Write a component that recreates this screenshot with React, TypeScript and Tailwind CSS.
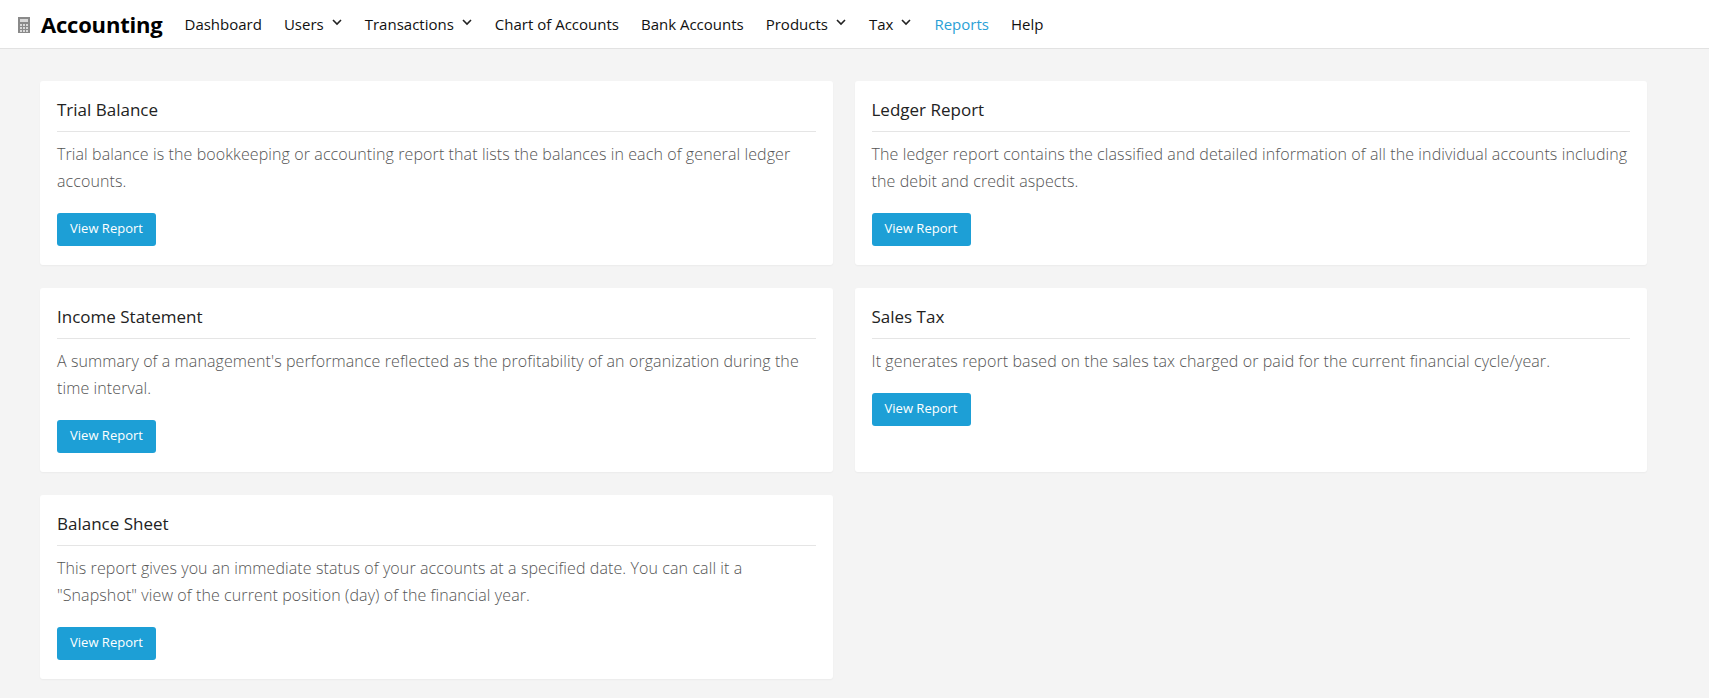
import React from "react";

const cards = [
  { t: "Trial Balance", d: "Trial balance is the bookkeeping or accounting report that lists the balances in each of general ledger accounts." },
  { t: "Ledger Report", d: "The ledger report contains the classified and detailed information of all the individual accounts including the debit and credit aspects." },
  { t: "Income Statement", d: "A summary of a management's performance reflected as the profitability of an organization during the time interval." },
  { t: "Sales Tax", d: "It generates report based on the sales tax charged or paid for the current financial cycle/year." },
  { t: "Balance Sheet", d: "This report gives you an immediate status of your accounts at a specified date. You can call it a \"Snapshot\" view of the current position (day) of the financial year." },
];

const Chev = () => (
  <svg width="12" height="12" viewBox="0 0 12 12" className="ml-[7px] mt-[-5px]"><path d="M2 4l4 4 4-4" stroke="#222" strokeWidth="1.6" fill="none" /></svg>
);

export default function App() {
  const nav: [string, boolean, boolean][] = [
    ["Dashboard", false, false], ["Users", true, false], ["Transactions", true, false], ["Chart of Accounts", false, false],
    ["Bank Accounts", false, false], ["Products", true, false], ["Tax", true, false], ["Reports", false, true], ["Help", false, false],
  ];
  return (
    <div className="min-h-[698px] bg-[#f4f4f4]" style={{ fontFamily: "'Open Sans', 'Noto Sans', sans-serif" }}>
      <div className="h-[49px] bg-white border-b border-[#e2e2e2] flex items-center pl-[18px]">
        <svg width="12" height="16" viewBox="0 0 12 16" className="mr-[11px] mt-[2px]">
          <rect x="0" y="0" width="12" height="16" fill="#8a8a8a" />
          <rect x="2" y="2" width="8" height="3" fill="#d8d8d8" />
          {[0, 1, 2].map(r => [0, 1, 2].map(c => <rect key={r + "-" + c} x={2 + c * 3} y={7 + r * 3} width="2" height="2" fill="#d8d8d8" />))}
        </svg>
        <span className="text-[22px] font-bold text-black mr-[22px] tracking-[-0.2px]">Accounting</span>
        <div className="flex items-center gap-[22px] text-[15px]">
          {nav.map(([n, c, a]) => (
            <span key={n} className={`flex items-center ${a ? "text-[#2a9fd6]" : "text-[#111]"}`}>{n}{c && <Chev />}</span>
          ))}
        </div>
      </div>
      <div className="pl-[40px] pr-[62px] pt-[32px] grid grid-cols-2 gap-x-[22px] gap-y-[23px] items-stretch">
        {cards.map(c => (
          <div key={c.t} className="bg-white rounded-[3px] px-[17px] pt-[16px] pb-[16px] min-h-[184px] shadow-[0_1px_2px_rgba(0,0,0,0.04)]">
            <div className="text-[17px] text-[#222] pb-[8px] border-b border-[#e5e5e5]">{c.t}</div>
            <p className="text-[16px] font-light text-[#555] leading-[27px] mt-[9px] tracking-[0.1px]">{c.d}</p>
            <button className="mt-[18px] bg-[#1d9fd6] text-white text-[13px] rounded-[3px] w-[99px] h-[33px]">View Report</button>
          </div>
        ))}
      </div>
    </div>
  );
}
